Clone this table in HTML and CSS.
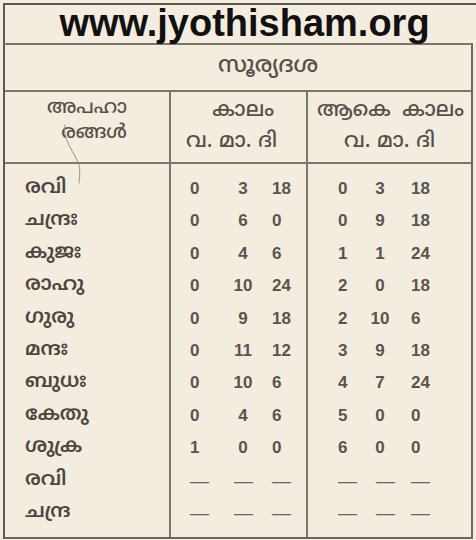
FILE: index.html
```html
<!DOCTYPE html>
<html lang="ml">
<head>
<meta charset="utf-8">
<title>സൂര്യദശ</title>
<link rel="stylesheet" href="styles.css">
</head>
<body>
<div class="sheet">
  <div class="site">www.jyothisham.org</div>
  <div class="tbl">
    <div class="caption">സൂര്യദശ</div>
    <div class="hd hd1"><span>അപഹാ</span><span class="sub">രങ്ങൾ</span></div>
    <div class="hd hd2"><span class="l1">കാലം</span><span class="l2">വ. മാ. ദി</span></div>
    <div class="hd hd3"><span class="l1">ആകെ കാലം</span><span>വ. മാ. ദി</span></div>

    <div class="name first">രവി</div>
    <div class="nums c2 first"><span>0</span><span>3</span><span>18</span></div>
    <div class="nums c3 first"><span>0</span><span>3</span><span>18</span></div>

    <div class="name">ചന്ദ്രഃ</div>
    <div class="nums c2"><span>0</span><span>6</span><span>0</span></div>
    <div class="nums c3"><span>0</span><span>9</span><span>18</span></div>

    <div class="name">കുജഃ</div>
    <div class="nums c2"><span>0</span><span>4</span><span>6</span></div>
    <div class="nums c3"><span>1</span><span>1</span><span>24</span></div>

    <div class="name">രാഹു</div>
    <div class="nums c2"><span>0</span><span>10</span><span>24</span></div>
    <div class="nums c3"><span>2</span><span>0</span><span>18</span></div>

    <div class="name">ഗുരു</div>
    <div class="nums c2"><span>0</span><span>9</span><span>18</span></div>
    <div class="nums c3"><span>2</span><span>10</span><span>6</span></div>

    <div class="name">മന്ദഃ</div>
    <div class="nums c2"><span>0</span><span>11</span><span>12</span></div>
    <div class="nums c3"><span>3</span><span>9</span><span>18</span></div>

    <div class="name">ബുധഃ</div>
    <div class="nums c2"><span>0</span><span>10</span><span>6</span></div>
    <div class="nums c3"><span>4</span><span>7</span><span>24</span></div>

    <div class="name">കേതു</div>
    <div class="nums c2"><span>0</span><span>4</span><span>6</span></div>
    <div class="nums c3"><span>5</span><span>0</span><span>0</span></div>

    <div class="name">ശുക്ര</div>
    <div class="nums c2"><span>1</span><span>0</span><span>0</span></div>
    <div class="nums c3"><span>6</span><span>0</span><span>0</span></div>

    <div class="name">രവി</div>
    <div class="nums c2 dash"><span>—</span><span>—</span><span>—</span></div>
    <div class="nums c3 dash"><span>—</span><span>—</span><span>—</span></div>

    <div class="name last">ചന്ദ്ര</div>
    <div class="nums c2 dash last"><span>—</span><span>—</span><span>—</span></div>
    <div class="nums c3 dash last"><span>—</span><span>—</span><span>—</span></div>
  </div>
  <svg class="scribble" width="30" height="80" viewBox="0 0 30 80" aria-hidden="true">
    <path d="M4 2 C2 10 6 18 9 24 C12 30 16 36 18 42 C19 46 19 52 18 60" fill="none" stroke="#8f8676" stroke-width="0.9" stroke-linecap="round"/>
  </svg>
</div>
</body>
</html>
```

FILE: styles.css
```css
html, body {
  margin: 0;
  padding: 0;
  background: #f3ede0;
}

*, *::before, *::after {
  box-sizing: border-box;
}

body {
  width: 476px;
  height: 540px;
  overflow: hidden;
  font-family: "Noto Sans Malayalam", "Manjari", "Meera", "Rachana", "Lohit Malayalam", "Noto Sans", sans-serif;
  color: #4f4841;
}

.sheet {
  position: relative;
  margin: 3px 0 0 3px;
  border-top: 2px solid #5f5950;
}

.site {
  height: 38px;
  line-height: 36px;
  border-left: 2px solid #5f5950;
  padding-left: 8px;
  text-align: center;
  font-family: "Liberation Sans", Arial, sans-serif;
  font-weight: bold;
  font-size: 38px;
  color: #121110;
  white-space: nowrap;
}

.tbl {
  display: grid;
  grid-template-columns: 166px 137px 163px;
  width: 470px;
  border-top: 2px solid #7d766b;
  border-left: 2px solid #5f5950;
  border-right: 2px solid #6c665c;
  border-bottom: 2px solid #6c665c;
}

.caption {
  grid-column: 1 / -1;
  height: 47px;
  border-bottom: 2px solid #7d766b;
  padding-left: 60px;
  text-align: center;
  line-height: 44px;
  font-size: 23px;
  font-weight: 500;
  color: #585149;
}

.hd {
  height: 72px;
  border-bottom: 2px solid #7d766b;
  display: flex;
  flex-direction: column;
  font-size: 21px;
  font-weight: 500;
  line-height: 24px;
  color: #575048;
}

.hd1 {
  border-right: 2px solid #7d766b;
  padding-top: 5px;
  row-gap: 1px;
  align-items: center;
  font-size: 19px;
}

.hd1 .sub {
  padding-left: 14px;
}

.hd2 {
  border-right: 2px solid #7d766b;
  padding-top: 7px;
  row-gap: 7px;
}

.hd2 .l1 {
  align-self: flex-end;
  padding-right: 32px;
}

.hd2 .l2 {
  padding-left: 15px;
}

.hd3 {
  padding-top: 7px;
  row-gap: 7px;
  align-items: center;
}

.hd3 .l1 {
  word-spacing: 5px;
  padding-left: 2px;
}

.name {
  height: 32.4px;
  line-height: 32.4px;
  border-right: 2px solid #7d766b;
  padding-left: 20px;
  font-size: 20px;
  font-weight: 600;
  color: #4d463f;
}

.nums {
  height: 32.4px;
  line-height: 32.4px;
  display: grid;
  font-family: "Liberation Sans", Arial, sans-serif;
  font-size: 17px;
  font-weight: bold;
  color: #5a544c;
}

.nums.c2 {
  border-right: 2px solid #7d766b;
  grid-template-columns: 36px 34px auto;
  padding-left: 19px;
}

.nums.c3 {
  grid-template-columns: 30px 24px auto;
  padding-left: 30px;
}

.nums span:nth-child(2) {
  text-align: center;
}

.nums.c2 span:nth-child(3) {
  padding-left: 12px;
}

.nums.c3 span:nth-child(3) {
  padding-left: 19px;
}

.nums.dash {
  font-weight: normal;
  color: #6a645a;
  font-size: 19px;
}

.nums.dash span:nth-child(2) {
  text-align: left;
  padding-left: 8px;
}

.first {
  height: 41.4px;
  padding-top: 9px;
}

.last {
  height: 40.4px;
  padding-bottom: 8px;
}

.scribble {
  position: absolute;
  left: 58px;
  top: 118px;
}
```
